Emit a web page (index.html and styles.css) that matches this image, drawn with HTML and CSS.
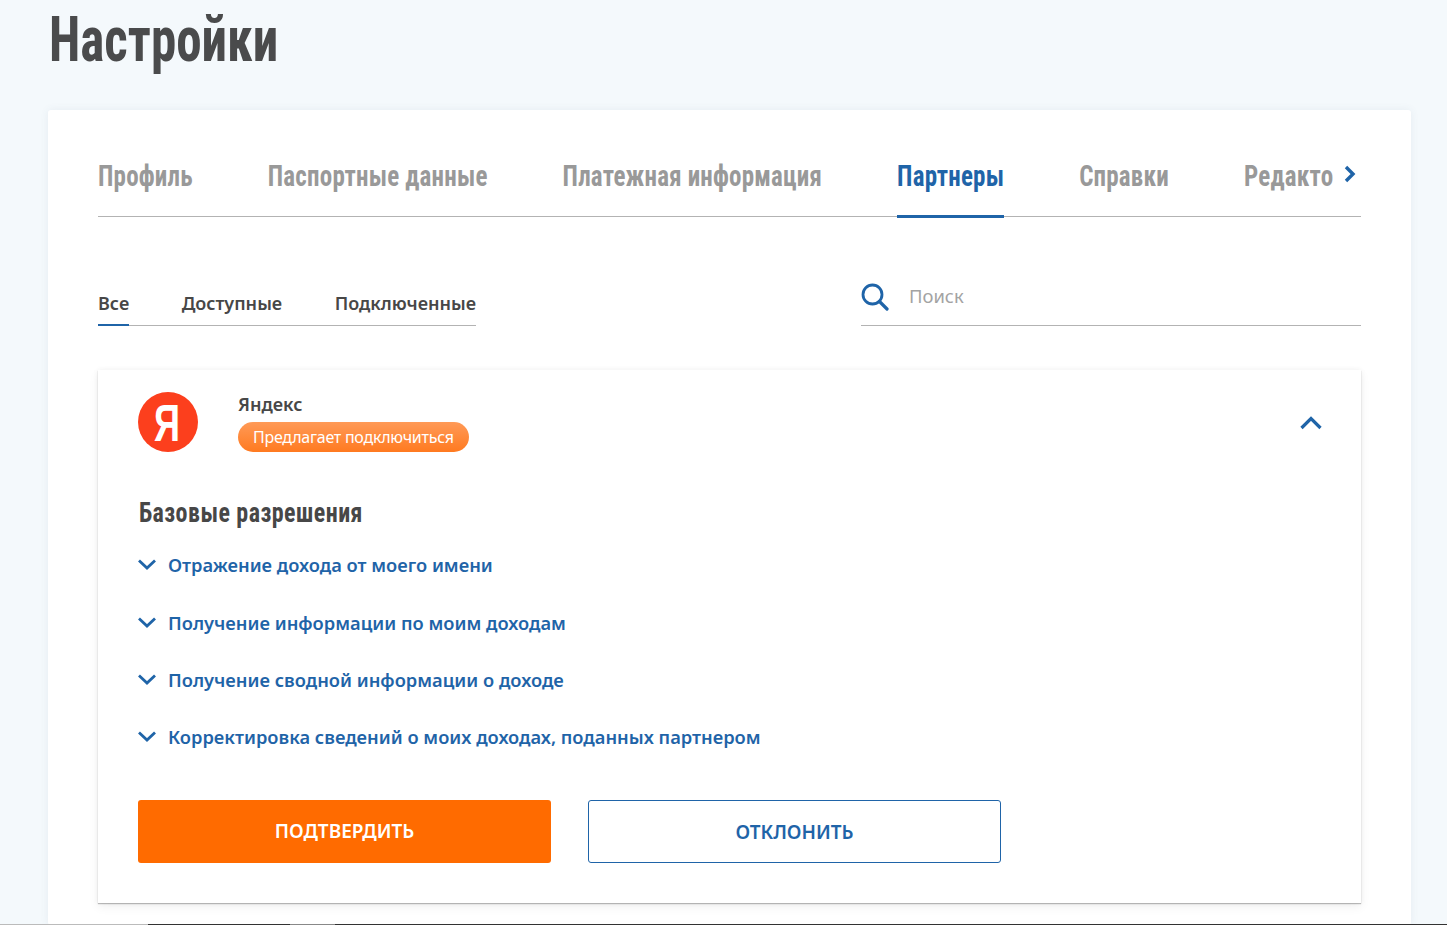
FILE: index.html
```html
<!doctype html>
<html>
<head>
    <title>Настройки</title>
    <meta name="viewport" content="width=device-width, initial-scale=1.0">
    <link rel="stylesheet" href="styles.css">
</head>
<body>

    <h1 class="page-title"><span class="tall">Настройки</span></h1>

    <div class="settings">
        <div class="tabs">
            <div class="tabs-list">
                <a class="tab"><span class="tall">Профиль</span></a>
                <a class="tab"><span class="tall">Паспортные данные</span></a>
                <a class="tab"><span class="tall">Платежная информация</span></a>
                <a class="tab active"><span class="tall">Партнеры</span></a>
                <a class="tab"><span class="tall">Справки</span></a>
                <a class="tab"><span class="tall">Редакто</span></a>
            </div>
            <div class="tabs-next">
                <svg width="12" height="18" viewBox="0 0 12 18"><path d="M2 2 9 9l-7 7" fill="none" stroke="#1f64a8" stroke-width="3.400"/></svg>
            </div>
        </div>

        <div class="toolbar">
            <div class="filters">
                <a class="filter active">Все</a>
                <a class="filter">Доступные</a>
                <a class="filter">Подключенные</a>
            </div>
            <div class="search">
                <svg width="28" height="28" viewBox="0 0 28 28"><circle cx="11.500" cy="11.500" r="9.500" fill="none" stroke="#1f64a8" stroke-width="2.800"/><path d="M18.500 18.500 26 26" fill="none" stroke="#1f64a8" stroke-width="3.200" stroke-linecap="round"/></svg>
                <input type="text" class="search-input" placeholder="Поиск">
            </div>
        </div>

        <div class="partner">
            <div class="partner-head">
                <div class="partner-logo">
                    <svg width="60" height="60" viewBox="0 0 60 60"><circle cx="30" cy="30" r="30" fill="#fc3f1d"/><text x="29" y="49" text-anchor="middle" class="logo-letter" textLength="26" lengthAdjust="spacingAndGlyphs">Я</text></svg>
                </div>
                <div class="partner-info">
                    <div class="partner-name">Яндекс</div>
                    <span class="badge">Предлагает подключиться</span>
                </div>
                <svg class="partner-toggle" width="22" height="14" viewBox="0 0 22 14"><path d="M1.500 12 11 2.500 20.500 12" fill="none" stroke="#1f64a8" stroke-width="3.200"/></svg>
            </div>

            <h2 class="perm-title"><span class="tall">Базовые разрешения</span></h2>

            <ul class="perms">
                <li class="perm"><svg width="18" height="11" viewBox="0 0 18 11"><path d="M1 1.500 9 9l8-7.500" fill="none" stroke="#1f64a8" stroke-width="2.800"/></svg>Отражение дохода от моего имени</li>
                <li class="perm"><svg width="18" height="11" viewBox="0 0 18 11"><path d="M1 1.500 9 9l8-7.500" fill="none" stroke="#1f64a8" stroke-width="2.800"/></svg>Получение информации по моим доходам</li>
                <li class="perm"><svg width="18" height="11" viewBox="0 0 18 11"><path d="M1 1.500 9 9l8-7.500" fill="none" stroke="#1f64a8" stroke-width="2.800"/></svg>Получение сводной информации о доходе</li>
                <li class="perm"><svg width="18" height="11" viewBox="0 0 18 11"><path d="M1 1.500 9 9l8-7.500" fill="none" stroke="#1f64a8" stroke-width="2.800"/></svg>Корректировка сведений о моих доходах, поданных партнером</li>
            </ul>

            <div class="actions">
                <button class="btn btn-confirm">ПОДТВЕРДИТЬ</button>
                <button class="btn btn-decline">ОТКЛОНИТЬ</button>
            </div>
        </div>
    </div>

    <div class="bottom-edge"></div>

</body>
</html>
```

FILE: styles.css
```css
html, body {
    height: 925px;
    overflow: hidden;
}
body {
    margin: 0;
    background-color: #f4f9fc;
    font-family: "Noto Sans", sans-serif;
    color: #474747;
    position: relative;
}

.tall {
    display: inline-block;
    transform-origin: 0 50%;
    transform: scaleY(1.2);
}
.page-title {
    margin: 0;
    padding: 5px 0 0 49px;
    height: 105px;
    box-sizing: border-box;
    font-family: "Roboto Condensed", sans-serif;
    font-size: 51px;
    line-height: 70px;
    font-weight: bold;
    color: #4a4b4c;
}
.page-title .tall {
    transform: scaleY(1.25);
}
.settings {
    margin: 5px 36px 0 48px;
    padding: 50px 50px 0;
    height: 815px;
    box-sizing: border-box;
    background-color: #fff;
    border-radius: 3px;
    box-shadow: 0 0 8px rgba(60, 90, 120, 0.08);
}

/* main tabs */
.tabs {
    display: flex;
    height: 57px;
    box-sizing: border-box;
    border-bottom: 1px solid #b3b3b3;
}
.tabs-list {
    display: flex;
    gap: 75px;
    width: 1229px;
    height: 58px;
}
.tab {
    flex: none;
    height: 58px;
    box-sizing: border-box;
    font-family: "Roboto Condensed", sans-serif;
    font-size: 25px;
    line-height: 31px;
    font-weight: bold;
    letter-spacing: 0.2px;
    color: #999;
}
.tab.active {
    color: #1f64a8;
    border-bottom: 3px solid #1f64a8;
}
.tabs-next {
    padding: 5px 0 0 17px;
}

/* filters + search */
.toolbar {
    display: flex;
    justify-content: space-between;
    margin-top: 60px;
    height: 49px;
}
.filters {
    display: flex;
    gap: 52.500px;
    height: 49px;
    box-sizing: border-box;
    border-bottom: 1px solid #b3b3b3;
}
.filter {
    height: 49px;
    box-sizing: border-box;
    padding-top: 13px;
    font-size: 18px;
    line-height: 26px;
    font-weight: 600;
    color: #474747;
}
.filter.active {
    border-bottom: 2px solid #1f64a8;
}
.search {
    width: 500px;
    display: flex;
    align-items: flex-start;
    gap: 20px;
    padding-top: 6px;
    box-sizing: border-box;
    border-bottom: 1px solid #b3b3b3;
}
.search-input {
    border: none;
    outline: none;
    padding: 0;
    flex: 1;
    height: 24px;
    font-family: "Noto Sans", sans-serif;
    font-size: 18.400px;
}
.search-input::placeholder {
    color: #a3a3a3;
}

/* partner card */
.partner {
    margin-top: 44px;
    height: 533px;
    box-sizing: border-box;
    padding: 22px 40px 0;
    background-color: #fff;
    box-shadow: 0 1px 1px rgba(0, 0, 0, 0.25), 0 4px 10px rgba(0, 0, 0, 0.06), 0 0 6px rgba(0, 0, 0, 0.05);
}
.partner-head {
    display: flex;
    height: 60px;
}
.partner-logo {
    width: 60px;
    height: 60px;
}
.logo-letter {
    font-family: "Liberation Sans", sans-serif;
    font-size: 52px;
    font-weight: bold;
    fill: #fff;
}
.partner-info {
    margin-left: 40px;
    flex: 1;
}
.partner-name {
    font-size: 18px;
    line-height: 26px;
    font-weight: 600;
    margin-top: -1px;
    margin-bottom: 5px;
}
.badge {
    display: inline-block;
    height: 30px;
    padding: 0 15px;
    border-radius: 15px;
    background: linear-gradient(#ff9a57, #ff7a20);
    color: #fff;
    font-size: 16px;
    letter-spacing: -0.25px;
    line-height: 31px;
}
.partner-toggle {
    margin: 24px -1px 0 0;
}
.perm-title {
    margin: 44px 0 0 1px;
    font-family: "Roboto Condensed", sans-serif;
    font-size: 24px;
    line-height: 34px;
    font-weight: bold;
    letter-spacing: 0.45px;
    color: #474747;
}
.perm-title .tall {
    transform: scaleY(1.15);
}
.perms {
    list-style: none;
    margin: 19px 0 0;
    padding: 0;
}
.perm {
    display: flex;
    align-items: center;
    gap: 12px;
    height: 30px;
    margin-bottom: 27px;
    font-size: 18.300px;
    font-weight: 600;
    color: #1f64a8;
}
.perm:first-child {
    margin-bottom: 28px;
}
.actions {
    display: flex;
    gap: 37px;
    margin-top: 49px;
}
.btn {
    width: 413px;
    height: 63px;
    border-radius: 3px;
    font-family: "Noto Sans", sans-serif;
    font-size: 19px;
    font-weight: 600;
}
.btn-confirm {
    background-color: #ff6b00;
    border: none;
    color: #fff;
    padding-bottom: 2px;
}
.btn-decline {
    background-color: #fff;
    border: 1px solid #1f64a8;
    color: #1f64a8;
}
.bottom-edge {
    position: absolute;
    left: 0;
    right: 0;
    bottom: 0;
    height: 1px;
    background: linear-gradient(to right, #bbb 148px, #333 148px, #333 290px, #888 290px, #888 335px, #333 335px);
}
```
